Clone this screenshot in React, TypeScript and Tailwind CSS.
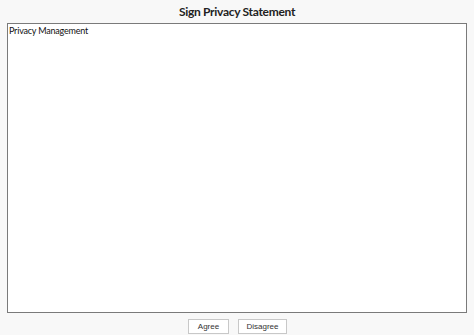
export default function App() {
  return (
    <div className="w-[474px] h-[335px] bg-[#f8f8f8] flex flex-col overflow-hidden" style={{ fontFamily: 'Lato, "Noto Sans", sans-serif' }}>
      <div className="h-[23px] flex items-center justify-center text-[12px] font-bold text-[#222] tracking-[-0.3px]">
        Sign Privacy Statement
      </div>
      <div className="mx-[7px] h-[290px] bg-white border border-[#7a7a7a] px-[1px] pt-[1px] text-[9px] leading-[12px] text-[#111] tracking-[-0.2px]">
        Privacy Management
      </div>
      <div className="flex justify-center gap-[9px] pt-[6px] pl-[1px]" style={{ fontFamily: '"Liberation Sans", Arial, sans-serif' }}>
        <button className="w-[41px] h-[15px] bg-white border border-[#c8c8c8] text-[8px] text-[#333]">Agree</button>
        <button className="w-[49px] h-[15px] bg-white border border-[#c8c8c8] text-[8px] text-[#333]">Disagree</button>
      </div>
    </div>
  );
}
